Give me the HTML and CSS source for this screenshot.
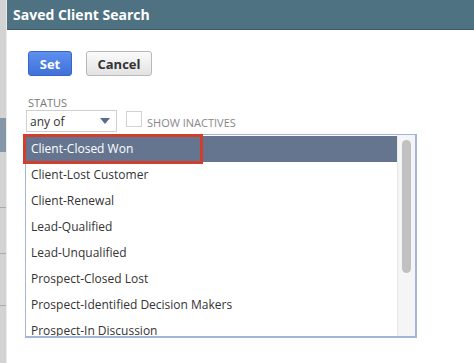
FILE: index.html
```html
<!DOCTYPE html>
<html lang="en">
<head>
    <meta charset="UTF-8">
    <title>Saved Client Search</title>
    <link rel="stylesheet" href="styles.css">
</head>
<body>
    <!-- page behind the popup -->
    <div class="backdrop">
        <div class="backdrop-tab"></div>
        <div class="backdrop-line line-1"></div>
        <div class="backdrop-line line-2"></div>
        <div class="backdrop-line line-3"></div>
    </div>

    <div class="dialog">
        <div class="dialog-header">Saved Client Search</div>

        <div class="dialog-body">
            <div class="button-row">
                <button class="btn btn-primary">Set</button>
                <button class="btn btn-secondary">Cancel</button>
            </div>

            <div class="field-label">STATUS</div>
            <div class="filter-row">
                <div class="select-box">
                    <span>any of</span>
                    <span class="select-arrow"></span>
                </div>
                <span class="check-box"></span>
                <span class="check-label">SHOW INACTIVES</span>
            </div>

            <div class="list-box">
                <ul class="list-items">
                    <li class="selected">Client-Closed Won</li>
                    <li>Client-Lost Customer</li>
                    <li>Client-Renewal</li>
                    <li>Lead-Qualified</li>
                    <li>Lead-Unqualified</li>
                    <li>Prospect-Closed Lost</li>
                    <li>Prospect-Identified Decision Makers</li>
                    <li>Prospect-In Discussion</li>
                </ul>
                <div class="scroll-track">
                    <div class="scroll-thumb"></div>
                </div>
                <div class="highlight-box"></div>
            </div>
        </div>
    </div>
</body>
</html>
```

FILE: styles.css
```css
body {
    margin: 0;
    padding: 0;
    width: 474px;
    height: 363px;
    overflow: hidden;
    display: flex;
    font-family: "Open Sans", "Liberation Sans", sans-serif;
    background-color: #d6d6d6;
}
/* Backdrop strip */
.backdrop {
    width: 6px;
    position: relative;
    background-color: #d3d3d3;
}
.backdrop-tab {
    position: absolute;
    top: 118px;
    left: 0;
    width: 6px;
    height: 34px;
    background-color: #8597a7;
}
.backdrop-line {
    position: absolute;
    left: 0;
    width: 6px;
    height: 1px;
    background-color: #a9a9a9;
}
.line-1 { top: 207px; }
.line-2 { top: 253px; }
.line-3 { top: 305px; }
/* Dialog */
.dialog {
    flex: 1;
    background: white;
    border-left: 1px solid #eaeaea;
}
.dialog-header {
    height: 29px;
    line-height: 29px;
    background-color: #4e7282;
    border-bottom: 1px solid #3c5b69;
    color: white;
    font-size: 14px;
    font-weight: bold;
    padding-left: 6px;
}
.dialog-body {
    padding: 21px 0 0 18px;
}
.button-row {
    display: flex;
    gap: 14px;
    margin-left: 3px;
}
.btn {
    height: 25px;
    border-radius: 3px;
    font-family: "Open Sans", "Liberation Sans", sans-serif;
    font-size: 13px;
    font-weight: bold;
    padding: 0;
    cursor: pointer;
}
.btn-primary {
    width: 44px;
    background: linear-gradient(#5d90ef, #3f71d8);
    border: 1px solid #3966c6;
    color: white;
}
.btn-secondary {
    width: 66px;
    background: linear-gradient(#fbfbfb, #e2e2e2);
    border: 1px solid #b8b8b8;
    color: #333;
}
.field-label {
    margin: 20px 0 0 3px;
    font-size: 11px;
    line-height: 13px;
    color: #777;
}
.filter-row {
    display: flex;
    align-items: center;
    height: 24px;
}
.select-box {
    width: 91px;
    height: 22px;
    box-sizing: border-box;
    border: 1px solid #cfcfcf;
    margin-left: 1px;
    display: flex;
    align-items: center;
    justify-content: space-between;
    padding: 0 6px 0 3px;
    font-size: 12px;
    color: #333;
}
.select-arrow {
    width: 0;
    height: 0;
    border-left: 5px solid transparent;
    border-right: 5px solid transparent;
    border-top: 6px solid #5b6b8c;
}
.check-box {
    width: 14px;
    height: 14px;
    border: 1px solid #d2d2d2;
    margin-left: 9px;
    margin-top: -4px;
}
.check-label {
    margin-left: 5px;
    font-size: 11px;
    color: #888;
    margin-top: 3px;
}
/* Status list */
.list-box {
    position: relative;
    width: 392px;
    height: 204px;
    box-sizing: border-box;
    border: 1px solid #a3b5d8;
    border-right-width: 2px;
    border-bottom-width: 2px;
    margin-top: 1px;
    display: flex;
}
.list-items {
    flex: 1;
    list-style: none;
    margin: 0;
    padding: 1px 0 0 0;
    overflow: hidden;
}
.list-items li {
    height: 26px;
    line-height: 26px;
    padding-left: 5px;
    font-size: 12px;
    color: #333;
    white-space: nowrap;
}
.list-items li.selected {
    background-color: #66758f;
    color: white;
}
.scroll-track {
    width: 17px;
    background-color: #f5f5f5;
    border-left: 1px solid #e8e8e8;
    position: relative;
}
.scroll-thumb {
    position: absolute;
    top: 5px;
    left: 4px;
    width: 9px;
    height: 133px;
    border-radius: 5px;
    background-color: #c1c1c1;
}
.highlight-box {
    position: absolute;
    top: -1px;
    left: -3px;
    width: 180px;
    height: 30px;
    box-sizing: border-box;
    border: 3px solid #d33d2c;
}
```
